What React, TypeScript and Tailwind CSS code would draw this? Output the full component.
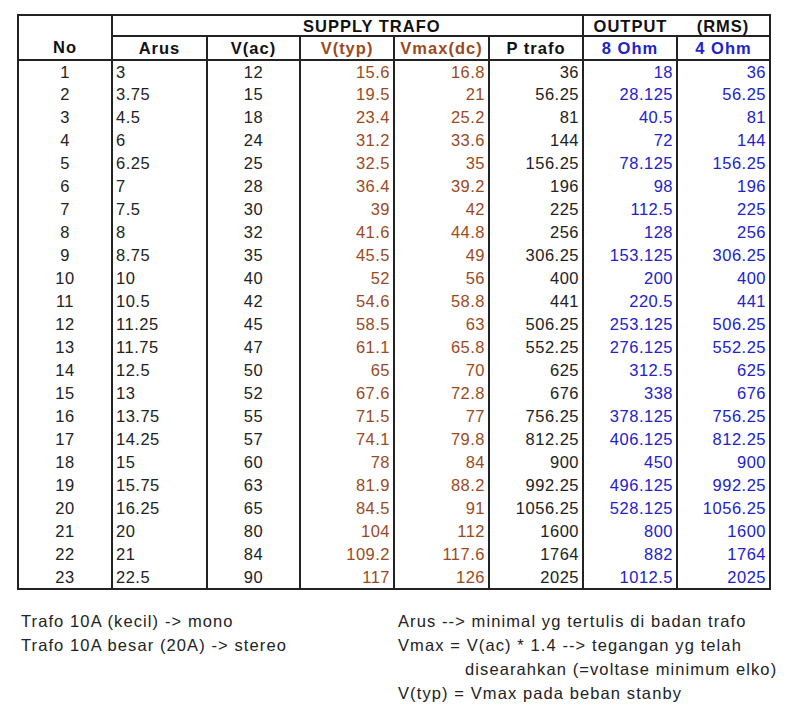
const rows: string[][] = [
  ["1", "3", "12", "15.6", "16.8", "36", "18", "36"],
  ["2", "3.75", "15", "19.5", "21", "56.25", "28.125", "56.25"],
  ["3", "4.5", "18", "23.4", "25.2", "81", "40.5", "81"],
  ["4", "6", "24", "31.2", "33.6", "144", "72", "144"],
  ["5", "6.25", "25", "32.5", "35", "156.25", "78.125", "156.25"],
  ["6", "7", "28", "36.4", "39.2", "196", "98", "196"],
  ["7", "7.5", "30", "39", "42", "225", "112.5", "225"],
  ["8", "8", "32", "41.6", "44.8", "256", "128", "256"],
  ["9", "8.75", "35", "45.5", "49", "306.25", "153.125", "306.25"],
  ["10", "10", "40", "52", "56", "400", "200", "400"],
  ["11", "10.5", "42", "54.6", "58.8", "441", "220.5", "441"],
  ["12", "11.25", "45", "58.5", "63", "506.25", "253.125", "506.25"],
  ["13", "11.75", "47", "61.1", "65.8", "552.25", "276.125", "552.25"],
  ["14", "12.5", "50", "65", "70", "625", "312.5", "625"],
  ["15", "13", "52", "67.6", "72.8", "676", "338", "676"],
  ["16", "13.75", "55", "71.5", "77", "756.25", "378.125", "756.25"],
  ["17", "14.25", "57", "74.1", "79.8", "812.25", "406.125", "812.25"],
  ["18", "15", "60", "78", "84", "900", "450", "900"],
  ["19", "15.75", "63", "81.9", "88.2", "992.25", "496.125", "992.25"],
  ["20", "16.25", "65", "84.5", "91", "1056.25", "528.125", "1056.25"],
  ["21", "20", "80", "104", "112", "1600", "800", "1600"],
  ["22", "21", "84", "109.2", "117.6", "1764", "882", "1764"],
  ["23", "22.5", "90", "117", "126", "2025", "1012.5", "2025"],
]

// alignment + colour per column
const cellClass = [
  "text-center",
  "text-left pl-[3px]",
  "text-center",
  "text-right pr-[3px] text-[#9b4a1e]",
  "text-right pr-[3px] text-[#9b4a1e]",
  "text-right pr-[3px]",
  "text-right pr-[3px] text-[#2222cc]",
  "text-right pr-[3px] text-[#2222cc]",
]

const widths = [94, 95, 93, 94, 95, 94, 94, 93]

export default function App() {
  return (
    <div className="w-[790px] h-[720px] bg-white text-[#222] font-['Liberation_Sans',Arial,sans-serif] text-[16.5px] overflow-hidden">
      <div className="pt-[14px] pl-[17px]">
        <table className="table-fixed border-collapse border-2 border-[#222] w-[753px]">
          <colgroup>
            {widths.map((w, i) => (
              <col key={i} style={{ width: w }} />
            ))}
          </colgroup>
          <thead className="font-bold tracking-[1px] text-[#111]">
            <tr className="h-[21px]">
              <th rowSpan={2} className="border-2 border-[#222] align-bottom p-0 pb-[1px] leading-[21px] font-bold">
                No
              </th>
              <th colSpan={5} className="border-b-2 border-r-2 border-[#222] p-0 pt-[1px] font-bold">
                <div className="pl-[190px] text-left leading-[18px]">SUPPLY TRAFO</div>
              </th>
              <th className="border-b-2 border-[#222] p-0 pt-[1px] font-bold leading-[18px]">OUTPUT</th>
              <th className="border-b-2 border-r-2 border-[#222] p-0 pt-[1px] font-bold leading-[18px]">(RMS)</th>
            </tr>
            <tr className="h-[24px]">
              <th className="border-2 border-[#222] p-0 pt-[1px] leading-[21px] font-bold">Arus</th>
              <th className="border-2 border-[#222] p-0 pt-[1px] leading-[21px] font-bold">V(ac)</th>
              <th className="border-2 border-[#222] p-0 pt-[1px] leading-[21px] font-bold text-[#9b4a1e]">V(typ)</th>
              <th className="border-2 border-[#222] p-0 pt-[1px] leading-[21px] font-bold text-[#9b4a1e]">Vmax(dc)</th>
              <th className="border-2 border-[#222] p-0 pt-[1px] leading-[21px] font-bold">P trafo</th>
              <th className="border-2 border-[#222] p-0 pt-[1px] leading-[21px] font-bold text-[#2222cc]">8 Ohm</th>
              <th className="border-2 border-[#222] p-0 pt-[1px] leading-[21px] font-bold text-[#2222cc]">4 Ohm</th>
            </tr>
          </thead>
          <tbody className="tracking-[0.5px]">
            {rows.map((r) => (
              <tr key={r[0]} className="h-[23px]">
                {r.map((v, i) => (
                  <td key={i} className={`border-x-2 border-[#222] p-0 leading-[21px] ${cellClass[i]}`}>
                    {v}
                  </td>
                ))}
              </tr>
            ))}
          </tbody>
        </table>
      </div>

      {/* Notes */}
      <div className="grid grid-cols-[377px_1fr] pl-[21px] pt-[19px] leading-[24px] tracking-[1.1px]">
        <div>
          <div>Trafo 10A (kecil) -&gt; mono</div>
          <div>Trafo 10A besar (20A) -&gt; stereo</div>
        </div>
        <div>
          <div>Arus --&gt; minimal yg tertulis di badan trafo</div>
          <div>Vmax = V(ac) * 1.4 --&gt; tegangan yg telah</div>
          <div className="pl-[67px]">disearahkan (=voltase minimum elko)</div>
          <div>V(typ) = Vmax pada beban stanby</div>
        </div>
      </div>
    </div>
  )
}
